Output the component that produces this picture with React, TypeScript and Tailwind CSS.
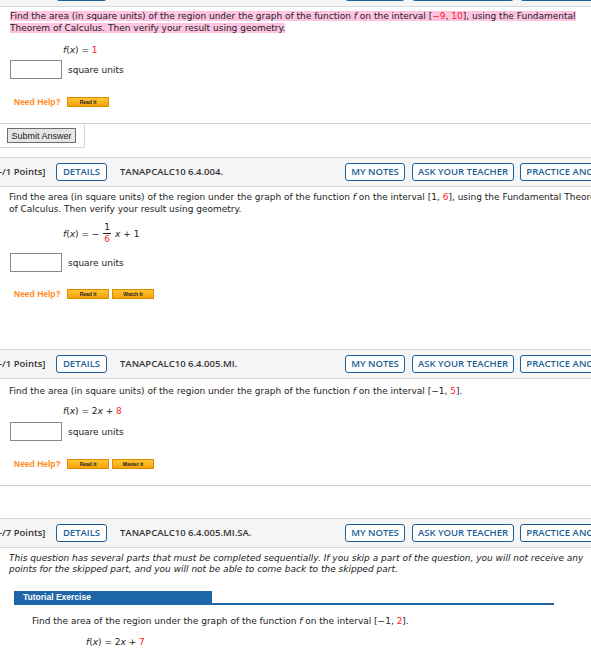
import React from "react";

const body = "font-['DejaVu_Sans',Verdana,sans-serif] text-[9px] leading-[12px] text-[#222]";

function HeaderButton({ label, w }: { label: string; w: string }) {
  return (
    <div
      className={`${w} h-[18px] shrink-0 flex items-center justify-center rounded-[3px] border border-[#1d5f96] bg-white text-[#1d5f96] font-['Open_Sans',sans-serif] font-semibold text-[9.5px] whitespace-nowrap overflow-hidden`}
    >
      {label}
    </div>
  );
}

function QuestionHeader({ points, code }: { points: string; code: string }) {
  return (
    <div className="h-[30px] shrink-0 flex items-center border-y border-[#d8d8d8] bg-[#f5f5f5] overflow-hidden font-['Open_Sans',sans-serif] text-[9.5px] text-[#333]">
      <div className="w-[345px] shrink-0 flex items-center">
        <span className="w-[57px] shrink-0 font-semibold -ml-[1px]">{points}</span>
        <HeaderButton label="DETAILS" w="w-[51px]" />
        <span className="ml-[13px] font-semibold whitespace-nowrap">{code}</span>
      </div>
      <HeaderButton label="MY NOTES" w="w-[60px]" />
      <div className="w-[7px] shrink-0" />
      <HeaderButton label="ASK YOUR TEACHER" w="w-[102px]" />
      <div className="w-[6px] shrink-0" />
      <HeaderButton label="PRACTICE ANOTHER" w="w-[104px]" />
    </div>
  );
}

function OrangeButton({ label }: { label: string }) {
  return (
    <div className="w-[42px] h-[10px] flex items-center justify-center bg-gradient-to-b from-[#ffc533] to-[#f3a400] border border-[#e08a00] font-['Liberation_Sans',Arial,sans-serif] font-bold text-[5px] text-[#222] leading-none">
      {label}
    </div>
  );
}

function NeedHelp({ buttons }: { buttons: string[] }) {
  return (
    <div className="flex items-center pl-[14px] gap-[3px]">
      <span className="w-[50px] font-['Liberation_Sans',Arial,sans-serif] font-bold text-[8.5px] text-[#ff8a1e]">
        Need Help?
      </span>
      {buttons.map((b) => (
        <OrangeButton key={b} label={b} />
      ))}
    </div>
  );
}

function Answer() {
  return (
    <div className="flex items-center pl-[10px] gap-[6px]">
      <div className="w-[52px] h-[19px] border border-[#888] bg-white" />
      <span className={body}>square units</span>
    </div>
  );
}

const Red = ({ children }: { children: React.ReactNode }) => <span className="text-[#ff1a1a]">{children}</span>;
const I = ({ children }: { children: React.ReactNode }) => <i>{children}</i>;

export default function App() {
  return (
    <div className={`w-[591px] h-[672px] overflow-hidden bg-white ${body}`}>
      <div className="w-[612px] flex flex-col">
        {/* tail of previous header */}
        <div className="h-[7px] shrink-0 overflow-hidden flex flex-col justify-end">
          <QuestionHeader points="-/1 Points]" code="TANAPCALC10 6.4.003." />
        </div>

        <div className="pl-[10px] pt-[3px]">
          <span className="bg-[#ffc4e1] box-decoration-clone">
            Find the area (in square units) of the region under the graph of the function <I>f</I> on the interval [<Red>−9</Red>, <Red>10</Red>], using the Fundamental Theorem of Calculus. Then verify your result using geometry.
          </span>
        </div>
        <div className="pl-[63px] mt-[10px]">
          <I>f</I>(<I>x</I>) = <Red>1</Red>
        </div>
        <div className="mt-[4px]">
          <Answer />
        </div>
        <div className="mt-[17px]">
          <NeedHelp buttons={["Read It"]} />
        </div>
        <div className="mt-[15px] border-t border-[#cfcfcf] flex">
          <div className="w-[85px] h-[24px] border-r border-b border-[#d6d6d6] pl-[7px] pt-[4px]">
            <div className="w-[69px] h-[15px] flex items-center justify-center bg-[#e6e6e6] border border-[#6d6d6d] font-['Liberation_Sans',Arial,sans-serif] text-[9px] text-[#222]">
              Submit Answer
            </div>
          </div>
        </div>

        {/* question 2 */}
        <div className="mt-[9px]">
          <QuestionHeader points="-/1 Points]" code="TANAPCALC10 6.4.004." />
        </div>
        <div className="pl-[9px] pt-[4px]">
          Find the area (in square units) of the region under the graph of the function <I>f</I> on the interval [1, <Red>6</Red>], using the Fundamental Theorem of Calculus. Then verify your result using geometry.
        </div>
        <div className="pl-[63px] mt-[7px] flex items-center gap-[4px]">
          <span>
            <I>f</I>(<I>x</I>) = −
          </span>
          <span className="inline-flex flex-col items-center leading-[11px]">
            <span className="border-b border-[#222] px-[1px]">1</span>
            <Red>6</Red>
          </span>
          <span>
            <I>x</I> + 1
          </span>
        </div>
        <div className="mt-[8px]">
          <Answer />
        </div>
        <div className="mt-[16px]">
          <NeedHelp buttons={["Read It", "Watch It"]} />
        </div>

        {/* question 3 */}
        <div className="mt-[49px]">
          <QuestionHeader points="-/1 Points]" code="TANAPCALC10 6.4.005.MI." />
        </div>
        <div className="pl-[9px] pt-[6px]">
          Find the area (in square units) of the region under the graph of the function <I>f</I> on the interval [−1, <Red>5</Red>].
        </div>
        <div className="pl-[63px] mt-[8px]">
          <I>f</I>(<I>x</I>) = 2<I>x</I> + <Red>8</Red>
        </div>
        <div className="mt-[5px]">
          <Answer />
        </div>
        <div className="mt-[17px]">
          <NeedHelp buttons={["Read It", "Master It"]} />
        </div>
        <div className="mt-[15px] border-t border-[#cfcfcf]" />

        {/* question 4 */}
        <div className="mt-[32px]">
          <QuestionHeader points="-/7 Points]" code="TANAPCALC10 6.4.005.MI.SA." />
        </div>
        <div className="pl-[9px] pt-[5px] italic leading-[11px]">
          This question has several parts that must be completed sequentially. If you skip a part of the question, you will not receive any points for the skipped part, and you will not be able to come back to the skipped part.
        </div>
        <div className="mt-[16px] ml-[14px] w-[540px] flex items-end border-b-2 border-[#1f66a8]">
          <div className="w-[198px] h-[12px] bg-[#1f66a8] pl-[9px] flex items-center font-['Liberation_Sans',Arial,sans-serif] font-bold text-[8.5px] text-white">
            Tutorial Exercise
          </div>
        </div>
        <div className="pl-[32px] mt-[10px]">
          Find the area of the region under the graph of the function <I>f</I> on the interval [−1, <Red>2</Red>].
        </div>
        <div className="pl-[86px] mt-[9px]">
          <I>f</I>(<I>x</I>) = 2<I>x</I> + <Red>7</Red>
        </div>
      </div>
    </div>
  );
}
